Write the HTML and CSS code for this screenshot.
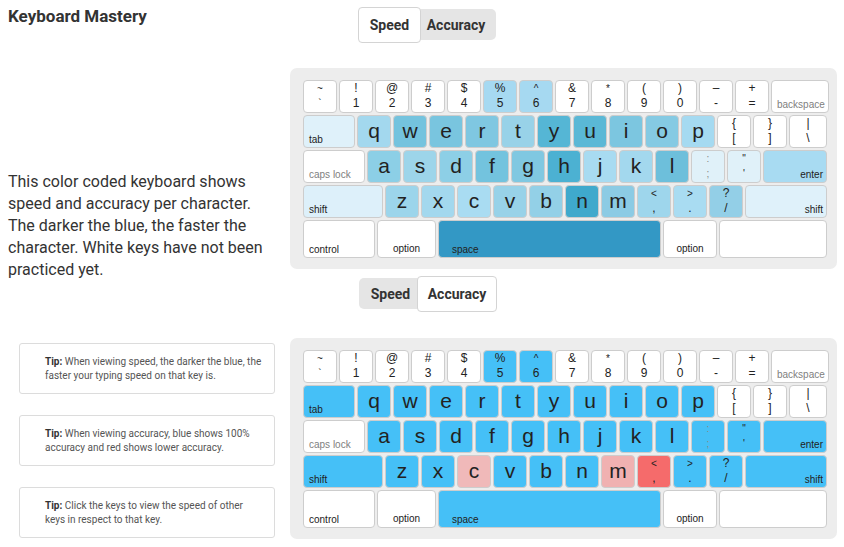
FILE: index.html
```html
<!DOCTYPE html>
<html>
<head>
<meta charset="utf-8">
<link rel="stylesheet" href="styles.css">
</head>
<body>
<div class="page">
  <h1 class="title">Keyboard Mastery</h1>
  <div class="toggle-row first">
    <div class="toggle">
      <div class="tbtn speed active">Speed</div>
      <div class="tbtn acc">Accuracy</div>
    </div>
  </div>

  <p class="desc">This color coded keyboard shows speed and accuracy per character. The darker the blue, the faster the character. White keys have not been practiced yet.</p>
  <div class="keyboard">
    <div class="krow">
      <div class="key dual"><span class="sm">~</span><span class="sm">`</span></div>
      <div class="key dual"><span>!</span><span>1</span></div>
      <div class="key dual"><span>@</span><span>2</span></div>
      <div class="key dual"><span>#</span><span>3</span></div>
      <div class="key dual"><span>$</span><span>4</span></div>
      <div class="key dual" style="background:#a6d9f1"><span>%</span><span>5</span></div>
      <div class="key dual" style="background:#a6d9f1"><span class="sm">^</span><span>6</span></div>
      <div class="key dual"><span>&amp;</span><span>7</span></div>
      <div class="key dual"><span class="sm">*</span><span>8</span></div>
      <div class="key dual"><span>(</span><span>9</span></div>
      <div class="key dual"><span>)</span><span>0</span></div>
      <div class="key dual"><span>–</span><span>-</span></div>
      <div class="key dual"><span>+</span><span>=</span></div>
      <div class="key mod right grow"><span class="gray">backspace</span></div>
    </div>
    <div class="krow">
      <div class="key mod w-tab" style="background:#dff1fa"><span>tab</span></div>
      <div class="key letter" style="background:#a3d8ee">q</div>
      <div class="key letter" style="background:#74c3de">w</div>
      <div class="key letter" style="background:#79c5df">e</div>
      <div class="key letter" style="background:#7fc7e1">r</div>
      <div class="key letter" style="background:#98d2e8">t</div>
      <div class="key letter" style="background:#55b6d5">y</div>
      <div class="key letter" style="background:#5ab8d6">u</div>
      <div class="key letter" style="background:#7cc6e0">i</div>
      <div class="key letter" style="background:#85cae3">o</div>
      <div class="key letter" style="background:#a5daf1">p</div>
      <div class="key dual"><span>{</span><span>[</span></div>
      <div class="key dual"><span>}</span><span>]</span></div>
      <div class="key dual grow"><span>|</span><span>\</span></div>
    </div>
    <div class="krow">
      <div class="key mod w-caps"><span class="gray">caps lock</span></div>
      <div class="key letter" style="background:#8ccfe6">a</div>
      <div class="key letter" style="background:#9dd5ea">s</div>
      <div class="key letter" style="background:#8dcfe6">d</div>
      <div class="key letter" style="background:#73c3de">f</div>
      <div class="key letter" style="background:#80c8e1">g</div>
      <div class="key letter" style="background:#4cb1d2">h</div>
      <div class="key letter" style="background:#a8dbf1">j</div>
      <div class="key letter" style="background:#a3d8ee">k</div>
      <div class="key letter" style="background:#6dbfdb">l</div>
      <div class="key dual" style="background:#e0f1f9"><span class="sm faint">:</span><span class="sm faint">;</span></div>
      <div class="key dual" style="background:#e0f1f9"><span class="sm">"</span><span class="sm">'</span></div>
      <div class="key mod right grow" style="background:#a8dbf2"><span>enter</span></div>
    </div>
    <div class="krow">
      <div class="key mod w-lshift" style="background:#ddf0fa"><span>shift</span></div>
      <div class="key letter" style="background:#9cd5eb">z</div>
      <div class="key letter" style="background:#a3d8ee">x</div>
      <div class="key letter" style="background:#a9dcf2">c</div>
      <div class="key letter" style="background:#98d2e8">v</div>
      <div class="key letter" style="background:#93d0e7">b</div>
      <div class="key letter" style="background:#3fa9cc">n</div>
      <div class="key letter" style="background:#8ccbe4">m</div>
      <div class="key dual" style="background:#9ed6ec"><span class="sm">&lt;</span><span>,</span></div>
      <div class="key dual" style="background:#a9dcf2"><span class="sm">&gt;</span><span>.</span></div>
      <div class="key dual" style="background:#93cfe7"><span>?</span><span>/</span></div>
      <div class="key mod right grow" style="background:#dff1fa"><span>shift</span></div>
    </div>
    <div class="krow tall">
      <div class="key mod w-ctrl"><span>control</span></div>
      <div class="key mod center w-opt1"><span>option</span></div>
      <div class="key mod w-space" style="background:#3398c5"><span class="spc">space</span></div>
      <div class="key mod center w-opt2"><span>option</span></div>
      <div class="key mod grow"></div>
    </div>
  </div>

  <div class="spacer"></div>
  <div class="toggle-row second">
    <div class="toggle">
      <div class="tbtn speed">Speed</div>
      <div class="tbtn acc active">Accuracy</div>
    </div>
  </div>

  <div class="tips">
    <div class="tip"><p><b>Tip:</b> When viewing speed, the darker the blue, the faster your typing speed on that key is.</p></div>
    <div class="tip"><p><b>Tip:</b> When viewing accuracy, blue shows 100% accuracy and red shows lower accuracy.</p></div>
    <div class="tip"><p><b>Tip:</b> Click the keys to view the speed of other keys in respect to that key.</p></div>
  </div>
  <div class="keyboard acc-board">
    <div class="krow">
      <div class="key dual"><span class="sm">~</span><span class="sm">`</span></div>
      <div class="key dual"><span>!</span><span>1</span></div>
      <div class="key dual"><span>@</span><span>2</span></div>
      <div class="key dual"><span>#</span><span>3</span></div>
      <div class="key dual"><span>$</span><span>4</span></div>
      <div class="key dual ok"><span>%</span><span>5</span></div>
      <div class="key dual ok"><span class="sm">^</span><span>6</span></div>
      <div class="key dual"><span>&amp;</span><span>7</span></div>
      <div class="key dual"><span class="sm">*</span><span>8</span></div>
      <div class="key dual"><span>(</span><span>9</span></div>
      <div class="key dual"><span>)</span><span>0</span></div>
      <div class="key dual"><span>–</span><span>-</span></div>
      <div class="key dual"><span>+</span><span>=</span></div>
      <div class="key mod right grow"><span class="gray">backspace</span></div>
    </div>
    <div class="krow">
      <div class="key mod w-tab ok"><span>tab</span></div>
      <div class="key letter ok">q</div>
      <div class="key letter ok">w</div>
      <div class="key letter ok">e</div>
      <div class="key letter ok">r</div>
      <div class="key letter ok">t</div>
      <div class="key letter ok">y</div>
      <div class="key letter ok">u</div>
      <div class="key letter ok">i</div>
      <div class="key letter ok">o</div>
      <div class="key letter ok">p</div>
      <div class="key dual"><span>{</span><span>[</span></div>
      <div class="key dual"><span>}</span><span>]</span></div>
      <div class="key dual grow"><span>|</span><span>\</span></div>
    </div>
    <div class="krow">
      <div class="key mod w-caps"><span class="gray">caps lock</span></div>
      <div class="key letter ok">a</div>
      <div class="key letter ok">s</div>
      <div class="key letter ok">d</div>
      <div class="key letter ok">f</div>
      <div class="key letter ok">g</div>
      <div class="key letter ok">h</div>
      <div class="key letter ok">j</div>
      <div class="key letter ok">k</div>
      <div class="key letter ok">l</div>
      <div class="key dual ok"><span class="sm faint">:</span><span class="sm faint">;</span></div>
      <div class="key dual ok"><span class="sm">"</span><span class="sm">'</span></div>
      <div class="key mod right grow ok"><span>enter</span></div>
    </div>
    <div class="krow">
      <div class="key mod w-lshift ok"><span>shift</span></div>
      <div class="key letter ok">z</div>
      <div class="key letter ok">x</div>
      <div class="key letter low1">c</div>
      <div class="key letter ok">v</div>
      <div class="key letter ok">b</div>
      <div class="key letter ok">n</div>
      <div class="key letter low2">m</div>
      <div class="key dual low3"><span class="sm">&lt;</span><span>,</span></div>
      <div class="key dual ok"><span class="sm">&gt;</span><span>.</span></div>
      <div class="key dual ok"><span>?</span><span>/</span></div>
      <div class="key mod right grow ok"><span>shift</span></div>
    </div>
    <div class="krow tall">
      <div class="key mod w-ctrl"><span>control</span></div>
      <div class="key mod center w-opt1"><span>option</span></div>
      <div class="key mod w-space ok"><span class="spc">space</span></div>
      <div class="key mod center w-opt2"><span>option</span></div>
      <div class="key mod grow"></div>
    </div>
  </div>
</div>
</body>
</html>
```

FILE: styles.css
```css
* { box-sizing: border-box; }

html, body {
  margin: 0;
  padding: 0;
  background: #ffffff;
}

body {
  font-family: Roboto, "Liberation Sans", Arial, sans-serif;
  color: #333;
}

.page {
  display: grid;
  grid-template-columns: 290px 547px;
  grid-template-rows: 68px 201px 69px 201px;
}

.title {
  margin: 0;
  padding: 6px 0 0 8px;
  font-size: 17px;
  line-height: 20px;
  font-weight: 700;
  color: #333;
}

.toggle-row {
  padding-left: 68px;
}
.toggle-row.first { padding-top: 9px; }
.toggle-row.second { padding-top: 9px; padding-left: 69px; }

.toggle {
  display: flex;
  align-items: center;
  width: 138px;
  height: 31px;
  background: #e5e5e5;
  border-radius: 5px;
}

.tbtn {
  position: relative;
  height: 31px;
  display: flex;
  align-items: center;
  justify-content: center;
  font-size: 14px;
  font-weight: 700;
  color: #333;
  border: 1px solid transparent;
  border-radius: 4px;
}
.tbtn.speed { width: 63px; }
.tbtn.acc { width: 80px; margin-left: -5px; }
.tbtn.active {
  height: 36px;
  background: #fff;
  border-color: #d4d4d4;
  z-index: 1;
}

.desc {
  margin: 0;
  padding: 103px 16px 0 8px;
  font-size: 16px;
  line-height: 22px;
  color: #333;
}

.keyboard {
  background: #ededed;
  border-radius: 7px;
  padding: 12px 10px 11px 13px;
  display: flex;
  flex-direction: column;
  gap: 2px;
}

.krow {
  display: flex;
  gap: 2px;
  height: 33px;
}
.krow.tall { height: 38px; }

.key {
  width: 34px;
  flex: none;
  background: #fff;
  border: 1px solid #cdcdcd;
  border-radius: 4px;
  font-family: "Liberation Sans", Arial, sans-serif;
  color: #222;
}
.key.grow { flex: 1; width: auto; }

.key.dual {
  display: flex;
  flex-direction: column;
  align-items: center;
  justify-content: center;
  font-size: 12px;
  line-height: 15px;
  padding-bottom: 1px;
}
.key.dual .sm { font-size: 10px; }
.key.dual .faint { color: #888; }

.key.letter {
  display: flex;
  align-items: center;
  justify-content: center;
  font-size: 21px;
  padding-bottom: 2px;
}

.key.mod {
  display: flex;
  align-items: flex-end;
  padding: 0 5px 1px 5px;
  font-size: 10px;
  line-height: 12px;
}
.key.mod.right { justify-content: flex-end; padding-right: 3px; }
.key.mod.center { justify-content: center; padding-bottom: 2px; }
.key.mod .gray { color: #808080; }
.key.mod .spc { padding-left: 8px; }

.w-tab { width: 52px; }
.w-caps { width: 62px; }
.w-lshift { width: 80px; }
.w-ctrl { width: 72px; }
.w-opt1 { width: 59px; }
.w-space { width: 223px; }
.w-opt2 { width: 54px; }

.acc-board .ok { background: #45c0f7; }
.acc-board .low1 { background: #f0b9b9; }
.acc-board .low2 { background: #f0b1b1; }
.acc-board .low3 { background: #f56b6b; }

.tips {
  padding: 5px 0 0 19px;
  display: flex;
  flex-direction: column;
  gap: 21px;
}

.tip {
  width: 256px;
  height: 51px;
  border: 1px solid #dcdcdc;
  border-radius: 3px;
  display: flex;
  align-items: center;
  padding: 0 12px 0 25px;
}
.tip p {
  margin: 0;
  font-size: 10px;
  line-height: 14px;
  color: #555;
}
.tip b { color: #333; }
```
